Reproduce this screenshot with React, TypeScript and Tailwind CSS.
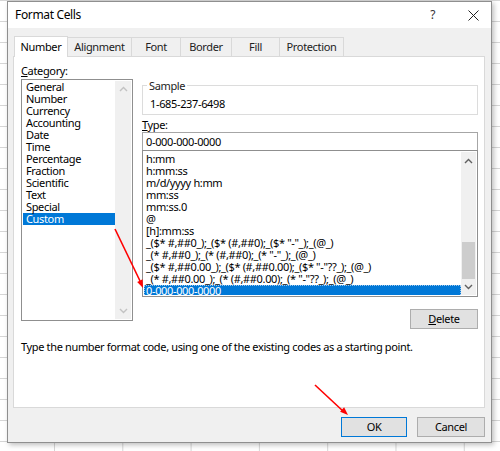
const categories = [
  "General",
  "Number",
  "Currency",
  "Accounting",
  "Date",
  "Time",
  "Percentage",
  "Fraction",
  "Scientific",
  "Text",
  "Special",
  "Custom",
]

const types = [
  "h:mm",
  "h:mm:ss",
  "m/d/yyyy h:mm",
  "mm:ss",
  "mm:ss.0",
  "@",
  "[h]:mm:ss",
  '_($* #,##0_);_($* (#,##0);_($* "-"_);_(@_)',
  '_(* #,##0_);_(* (#,##0);_(* "-"_);_(@_)',
  '_($* #,##0.00_);_($* (#,##0.00);_($* "-"??_);_(@_)',
  '_(* #,##0.00_);_(* (#,##0.00);_(* "-"??_);_(@_)',
  "0-000-000-0000",
]

const tabs = [
  { name: "Number", w: "w-[54px]" },
  { name: "Alignment", w: "w-[64px]" },
  { name: "Font", w: "w-[49px]" },
  { name: "Border", w: "w-[51px]" },
  { name: "Fill", w: "w-[48px]" },
  { name: "Protection", w: "w-[64px]" },
]

function Chevron({ up, faded }: { up?: boolean; faded?: boolean }) {
  return (
    <svg width="9" height="6" viewBox="0 0 9 6">
      <polyline
        points={up ? "1,5 4.5,1.5 8,5" : "1,1 4.5,4.5 8,1"}
        fill="none"
        stroke={faded ? "#c2c2c2" : "#606060"}
        strokeWidth="1.4"
      />
    </svg>
  )
}

export default function App() {
  return (
    <div className="relative w-[500px] h-[451px] overflow-hidden bg-white bg-[linear-gradient(to_right,#d6d6d6_1px,transparent_1px),linear-gradient(to_bottom,#d6d6d6_1px,transparent_1px)] bg-[length:68.3px_21px] bg-[position:54px_0px] font-['Noto_Sans',sans-serif] text-[11px] tracking-[-0.35px] text-black">
      {/* dialog */}
      <div className="ml-[7px] mt-[1px] w-[485px] h-[442px] border border-[#8f8f8f] bg-[#f0f0f0] shadow-[2px_2px_5px_rgba(0,0,0,0.25)] flex flex-col">
        {/* title bar */}
        <div className="h-[26px] bg-white flex items-center pl-[7px] pr-[12px]">
          <span className="text-[12px]">Format Cells</span>
          <span className="ml-auto mr-[33px] text-[12px] text-[#333]">?</span>
          <svg width="11" height="11" viewBox="0 0 11 11">
            <path d="M0.5 0.5 L10.5 10.5 M10.5 0.5 L0.5 10.5" stroke="#222" strokeWidth="1" />
          </svg>
        </div>

        <div className="flex-1 pl-[5px] pr-[6px] pt-[7px]">
          {/* tabs */}
          <div className="h-[21px] flex items-end pl-[1px]">
            {tabs.map((t, i) =>
              i === 0 ? (
                <div
                  key={t.name}
                  className={`${t.w} h-[21px] -mb-px relative z-10 bg-white border-t border-l border-r border-[#d9d9d9] flex items-center justify-center`}
                >
                  {t.name}
                </div>
              ) : (
                <div
                  key={t.name}
                  className={`${t.w} h-[19px] bg-[#f0f0f0] border-t border-r border-[#d9d9d9] flex items-center justify-center text-[#222]`}
                >
                  {t.name}
                </div>
              )
            )}
          </div>

          {/* panel */}
          <div className="h-[352px] bg-white border border-[#d9d9d9] pl-[7px] pr-[6px] pt-[7px]">
            <div className="flex gap-[9px]">
              {/* category */}
              <div className="w-[112px]">
                <div className="h-[15px] leading-[13px]">
                  <span className="underline">C</span>ategory:
                </div>
                <div className="h-[242px] border border-[#8f8f8f] flex p-px">
                  <div className="flex-1 leading-[12px]">
                    {categories.map((c) => (
                      <div
                        key={c}
                        className={
                          c === "Custom"
                            ? "h-[12px] pl-[3px] bg-[#0078d7] text-white"
                            : "h-[12px] pl-[3px]"
                        }
                      >
                        {c}
                      </div>
                    ))}
                  </div>
                  <div className="w-[16px] bg-[#f0f0f0] flex flex-col items-center justify-between py-[5px]">
                    <Chevron up faded />
                    <Chevron faded />
                  </div>
                </div>
              </div>

              {/* type */}
              <div className="w-[336px]">
                <div className="relative mt-[21px] h-[30px] border border-[#dcdcdc] pl-[7px] pt-[10px]">
                  <span className="absolute -top-[8px] left-[4px] bg-white px-[2px] text-[#222]">Sample</span>
                  <div>1-685-237-6498</div>
                </div>
                <div className="mt-[2px] h-[15px] leading-[15px]">
                  <span className="underline">T</span>ype:
                </div>
                <div className="h-[19px] border border-[#a6a6a6] pl-[3px] leading-[17px]">0-000-000-0000</div>
                <div className="h-[147px] -mt-px border border-[#8f8f8f] flex p-px">
                  <div className="flex-1 leading-[12px] pt-[1px] overflow-hidden whitespace-nowrap">
                    {types.map((t) => (
                      <div
                        key={t}
                        className={
                          t === "0-000-000-0000"
                            ? "h-[12px] pl-[2px] bg-[#0078d7] text-white outline outline-1 outline-dotted outline-[#9dc6ea] -outline-offset-1"
                            : "h-[12px] pl-[2px]"
                        }
                      >
                        {t}
                      </div>
                    ))}
                  </div>
                  <div className="w-[15px] bg-[#f0f0f0] flex flex-col items-center">
                    <div className="h-[17px] flex items-center justify-center">
                      <Chevron up />
                    </div>
                    <div className="flex-1 w-full flex flex-col justify-end">
                      <div className="h-[37px] bg-[#cdcdcd] mx-[1px]" />
                    </div>
                    <div className="h-[16px] flex items-center justify-center">
                      <Chevron />
                    </div>
                  </div>
                </div>
                <div className="flex justify-end mt-[12px]">
                  <div className="w-[68px] h-[20px] border border-[#adadad] bg-[#e1e1e1] flex items-center justify-center">
                    <span>
                      <span className="underline">D</span>elete
                    </span>
                  </div>
                </div>
              </div>
            </div>
            <div className="mt-[10px]">
              Type the number format code, using one of the existing codes as a starting point.
            </div>
          </div>

          {/* buttons */}
          <div className="flex justify-end gap-[10px] mt-[9px]">
            <div className="w-[66px] h-[20px] border border-[#0078d7] bg-[#e1e1e1] flex items-center justify-center">OK</div>
            <div className="w-[68px] h-[20px] border border-[#adadad] bg-[#e1e1e1] flex items-center justify-center">Cancel</div>
          </div>
        </div>
      </div>

      {/* red annotation arrows */}
      <svg className="absolute left-0 top-0 pointer-events-none" width="500" height="451" viewBox="0 0 500 451">
        <line x1="115" y1="229" x2="141" y2="283" stroke="#ff0000" strokeWidth="1.6" />
        <polygon points="143,288 142.6,279.3 137.2,281.9" fill="#ff0000" />
        <line x1="315" y1="385" x2="344" y2="412" stroke="#ff0000" strokeWidth="1.6" />
        <polygon points="348,415 344.1,407.2 340.1,411.8" fill="#ff0000" />
      </svg>
    </div>
  )
}
